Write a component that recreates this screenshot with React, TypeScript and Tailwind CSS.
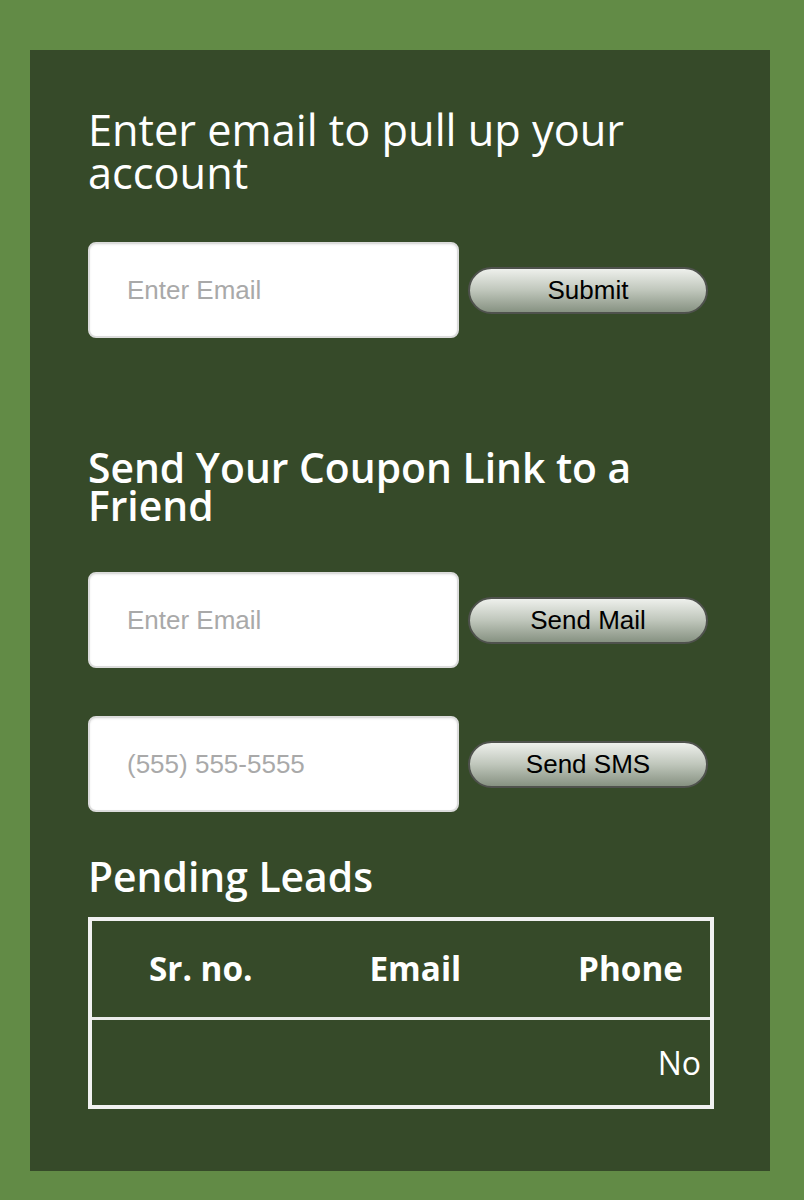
import React from "react";

const heading = "font-['Open_Sans',sans-serif] text-white";
const arial = "font-['Liberation_Sans',Arial,sans-serif]";

function Row({ placeholder, label, className = "" }: { placeholder: string; label: string; className?: string }) {
  return (
    <div className={`flex items-center ${className}`}>
      <input
        type="text"
        placeholder={placeholder}
        className={`${arial} w-[371px] h-[96px] shrink-0 rounded-[8px] border-2 border-[#dcdcdc] bg-white pl-[37px] pr-3 text-[26px] text-black outline-none placeholder:text-[#a9a9a9] shadow-[inset_0_1px_2px_rgba(0,0,0,0.08)]`}
      />
      <button
        type="button"
        className={`${arial} ml-[9px] w-[240px] h-[47px] shrink-0 rounded-full border-2 border-[#4f524d] bg-linear-to-b from-[#eef0ec] via-[#bfc6bb] to-[#879282] text-[26px] leading-none text-black`}
      >
        {label}
      </button>
    </div>
  );
}

export default function App() {
  return (
    <div className="min-h-[1200px] w-full bg-[#628b46] pt-[50px] pb-[28px] px-[30px]">
      <div className="w-[740px] bg-[#364a29] pt-[58px] pl-[58px] pr-[56px] pb-[62px]">
        <h1 className={`${heading} text-[43.3px] leading-[43px] font-normal`}>
          Enter email to pull up your account
        </h1>
        <Row placeholder="Enter Email" label="Submit" className="mt-[48px]" />

        <h2 className={`${heading} mt-[110px] text-[40.8px] leading-[38px] font-semibold`}>
          Send Your Coupon Link to a Friend
        </h2>
        <Row placeholder="Enter Email" label="Send Mail" className="mt-[48px]" />
        <Row placeholder="(555) 555-5555" label="Send SMS" className="mt-[48px]" />

        <h2 className={`${heading} mt-[42px] text-[40.8px] leading-[44px] font-semibold`}>
          Pending Leads
        </h2>

        <div className={`${heading} mt-[19px] w-[626px] border-4 border-[#f1f1f1]`}>
          <div className="flex h-[99px] items-center justify-between border-b-[3px] border-[#ebebeb] pl-[57px] pr-[27px] text-[33.3px] font-bold">
            <span>Sr. no.</span>
            <span>Email</span>
            <span>Phone</span>
          </div>
          <div className="flex h-[85px] items-center justify-end pr-[9px] text-[32px] font-normal">
            <span>No</span>
          </div>
        </div>
      </div>
    </div>
  );
}
